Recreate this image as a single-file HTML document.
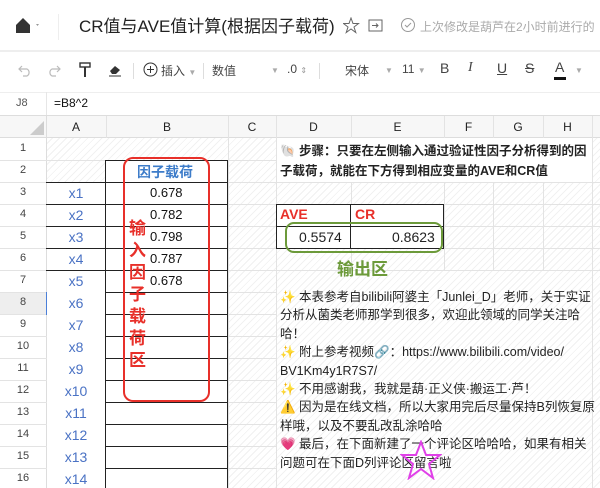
<!DOCTYPE html><html><head><meta charset="utf-8"><style>
*{margin:0;padding:0;box-sizing:border-box}
body{width:600px;height:488px;overflow:hidden;background:#fff;font-family:"Liberation Sans","Noto Sans CJK SC",sans-serif;position:relative;color:#222}
.a{position:absolute;white-space:nowrap}
.h{position:absolute;height:1px;background:#e3e3e3}
.v{position:absolute;width:1px;background:#e3e3e3}
.k{position:absolute;background:#222}
.rn{position:absolute;left:0;width:46px;text-align:center;font-size:11px;color:#444}
.cx{position:absolute;left:46px;width:60px;text-align:center;font-size:14px;color:#4a72c4}
.bv{position:absolute;left:150px;font-size:13px;color:#111}
.tb{position:absolute;top:62px;font-size:12px;color:#444}
.t{position:absolute;left:280px;font-size:12.5px;line-height:18.4px;color:#222;white-space:nowrap}
</style></head><body>
<div style="position:absolute;left:46px;top:138px;width:554px;height:350px;background:repeating-linear-gradient(135deg,#fff 0 4px,#f1f1f1 4px 5px)"></div>
<div style="position:absolute;left:0;top:138px;width:46px;height:350px;background:#fff"></div>
<svg class="a" style="left:14px;top:15px" width="28" height="20"><path d="M2 10 L9 3 L16 10 V18 H2Z" fill="#333"/><path d="M22 9 l3 0 l-1.5 2z" fill="#999"/></svg>
<div class="v" style="left:58px;top:14px;height:26px;background:#eee"></div>
<div class="a" style="left:79px;top:12px;font-size:17px;color:#222">CR值与AVE值计算(根据因子载荷)</div>
<svg class="a" style="left:343px;top:17px" width="50" height="18"><path d="M8 1 L10 6.5 L15.5 6.5 L11 10 L12.8 15.5 L8 12 L3.2 15.5 L5 10 L0.5 6.5 L6 6.5Z" fill="none" stroke="#666" stroke-width="1"/><rect x="26" y="3" width="13" height="11" fill="none" stroke="#666"/><path d="M29 8.5h6m-2-2l2 2-2 2" stroke="#666" fill="none"/></svg>
<svg class="a" style="left:400px;top:17px" width="16" height="16"><circle cx="8" cy="8" r="6.5" fill="none" stroke="#999"/><path d="M5 8l2 2 4-4" stroke="#999" fill="none"/></svg>
<div class="a" style="left:420px;top:18px;font-size:12px;color:#aaa">上次修改是葫芦在2小时前进行的</div>
<div class="h" style="left:0;top:50px;width:600px;background:#eee;height:2px"></div>
<svg class="a" style="left:18px;top:63px" width="14" height="14"><path d="M4 3 L1 6 L4 9 M1 6 H9 A4 4 0 0 1 9 13 H5" fill="none" stroke="#bbb" stroke-width="1.2"/></svg>
<svg class="a" style="left:47px;top:63px" width="14" height="14"><path d="M10 3 L13 6 L10 9 M13 6 H5 A4 4 0 0 0 5 13 H9" fill="none" stroke="#bbb" stroke-width="1.2"/></svg>
<svg class="a" style="left:78px;top:62px" width="14" height="16"><rect x="2" y="1" width="10" height="4" fill="none" stroke="#333" stroke-width="1.4"/><path d="M7 5 V8 M7 8 V15" stroke="#333" stroke-width="2"/></svg>
<svg class="a" style="left:108px;top:63px" width="14" height="14"><path d="M2 8 L7 3 L12 7 L8 11 H4Z" fill="#333"/><path d="M1 13h12" stroke="#333"/></svg>
<div class="v" style="left:133px;top:63px;height:16px;background:#ddd"></div>
<svg class="a" style="left:143px;top:62px" width="15" height="15"><circle cx="7.5" cy="7.5" r="6.5" fill="none" stroke="#333"/><path d="M4 7.5h7M7.5 4v7" stroke="#333"/></svg>
<div class="tb" style="left:161px">插入 <span style="color:#aaa;font-size:8px">▼</span></div>
<div class="v" style="left:203px;top:63px;height:16px;background:#ddd"></div>
<div class="tb" style="left:212px">数值</div>
<div class="tb" style="left:271px;color:#aaa;font-size:8px;top:66px">▼</div>
<div class="tb" style="left:287px">.0 <span style="font-size:8px;color:#999">⇕</span></div>
<div class="v" style="left:319px;top:63px;height:16px;background:#ddd"></div>
<div class="tb" style="left:345px">宋体</div>
<div class="tb" style="left:385px;color:#aaa;font-size:8px;top:66px">▼</div>
<div class="tb" style="left:402px">11 <span style="font-size:8px;color:#aaa">▼</span></div>
<div class="tb" style="left:440px;font-size:14px;top:60px">B</div>
<div class="tb" style="left:468px;font-size:14px;top:60px;font-style:italic;font-family:'Liberation Serif'">I</div>
<div class="tb" style="left:497px;font-size:14px;top:60px;text-decoration:underline">U</div>
<div class="tb" style="left:525px;font-size:14px;top:60px;text-decoration:line-through">S</div>
<div class="tb" style="left:555px;font-size:14px;top:59px">A</div>
<div class="a" style="left:554px;top:77px;width:12px;height:3px;background:#111"></div>
<div class="tb" style="left:575px;color:#aaa;font-size:8px;top:66px">▼</div>
<div class="h" style="left:0;top:92px;width:600px;background:#eee"></div>
<div class="a" style="left:16px;top:97px;font-size:11px;color:#555">J8</div>
<div class="v" style="left:46px;top:92px;height:24px;background:#e6e6e6"></div>
<div class="a" style="left:54px;top:96px;font-size:12px;color:#111">=B8^2</div>
<div class="h" style="left:0;top:115px;width:600px;background:#ddd"></div>
<div class="a" style="left:0;top:116px;width:600px;height:22px;background:#f7f7f7"></div>
<svg class="a" style="left:30px;top:121px" width="14" height="14"><path d="M14 0V14H0Z" fill="#ccc"/></svg>
<div class="a" style="left:46px;top:120px;width:60px;text-align:center;font-size:12px">A</div>
<div class="a" style="left:106px;top:120px;width:122px;text-align:center;font-size:12px">B</div>
<div class="a" style="left:228px;top:120px;width:48px;text-align:center;font-size:12px">C</div>
<div class="a" style="left:276px;top:120px;width:75px;text-align:center;font-size:12px">D</div>
<div class="a" style="left:351px;top:120px;width:93px;text-align:center;font-size:12px">E</div>
<div class="a" style="left:444px;top:120px;width:49px;text-align:center;font-size:12px">F</div>
<div class="a" style="left:493px;top:120px;width:50px;text-align:center;font-size:12px">G</div>
<div class="a" style="left:543px;top:120px;width:49px;text-align:center;font-size:12px">H</div>
<div class="h" style="left:0;top:137px;width:600px;background:#ddd"></div>
<div class="v" style="left:46px;top:116px;height:372px;background:#ddd"></div>
<div class="v" style="left:106px;top:116px;height:22px"></div>
<div class="v" style="left:228px;top:116px;height:372px"></div>
<div class="v" style="left:276px;top:116px;height:372px"></div>
<div class="v" style="left:351px;top:116px;height:22px"></div>
<div class="v" style="left:351px;top:182px;height:88px"></div>
<div class="v" style="left:444px;top:116px;height:22px"></div>
<div class="v" style="left:444px;top:182px;height:88px"></div>
<div class="v" style="left:493px;top:116px;height:22px"></div>
<div class="v" style="left:493px;top:182px;height:88px"></div>
<div class="v" style="left:543px;top:116px;height:22px"></div>
<div class="v" style="left:543px;top:182px;height:88px"></div>
<div class="v" style="left:592px;top:116px;height:372px"></div>
<div class="h" style="left:0;top:160px;width:276px"></div>
<div class="h" style="left:0;top:182px;width:600px"></div>
<div class="h" style="left:0;top:204px;width:600px"></div>
<div class="h" style="left:0;top:226px;width:600px"></div>
<div class="h" style="left:0;top:248px;width:600px"></div>
<div class="h" style="left:0;top:270px;width:600px"></div>
<div class="h" style="left:0;top:292px;width:276px"></div>
<div class="h" style="left:0;top:314px;width:276px"></div>
<div class="h" style="left:0;top:336px;width:276px"></div>
<div class="h" style="left:0;top:358px;width:276px"></div>
<div class="h" style="left:0;top:380px;width:276px"></div>
<div class="h" style="left:0;top:402px;width:276px"></div>
<div class="h" style="left:0;top:424px;width:276px"></div>
<div class="h" style="left:0;top:446px;width:276px"></div>
<div class="h" style="left:0;top:468px;width:276px"></div>
<div class="a" style="left:0;top:293px;width:46px;height:21px;background:#eee"></div>
<div class="rn" style="top:142px">1</div><div class="rn" style="top:164px">2</div><div class="rn" style="top:186px">3</div><div class="rn" style="top:208px">4</div><div class="rn" style="top:230px">5</div><div class="rn" style="top:252px">6</div><div class="rn" style="top:274px">7</div><div class="rn" style="top:296px">8</div><div class="rn" style="top:318px">9</div><div class="rn" style="top:340px">10</div><div class="rn" style="top:362px">11</div><div class="rn" style="top:384px">12</div><div class="rn" style="top:406px">13</div><div class="rn" style="top:428px">14</div><div class="rn" style="top:450px">15</div><div class="rn" style="top:472px">16</div>
<div class="a" style="left:47px;top:182px;width:181px;height:306px;background:#fff"></div>
<div class="a" style="left:106px;top:160px;width:122px;height:22px;background:#fff"></div>
<div class="k" style="left:46px;top:182px;width:182px;height:1px"></div>
<div class="k" style="left:46px;top:204px;width:182px;height:1px"></div>
<div class="k" style="left:46px;top:226px;width:182px;height:1px"></div>
<div class="k" style="left:46px;top:248px;width:182px;height:1px"></div>
<div class="k" style="left:46px;top:270px;width:182px;height:1px"></div>
<div class="k" style="left:106px;top:292px;width:122px;height:1px"></div>
<div class="k" style="left:106px;top:314px;width:122px;height:1px"></div>
<div class="k" style="left:106px;top:336px;width:122px;height:1px"></div>
<div class="k" style="left:106px;top:358px;width:122px;height:1px"></div>
<div class="k" style="left:106px;top:380px;width:122px;height:1px"></div>
<div class="k" style="left:106px;top:402px;width:122px;height:1px"></div>
<div class="k" style="left:106px;top:424px;width:122px;height:1px"></div>
<div class="k" style="left:106px;top:446px;width:122px;height:1px"></div>
<div class="k" style="left:106px;top:468px;width:122px;height:1px"></div>
<div class="k" style="left:106px;top:160px;width:122px;height:1px"></div>
<div class="k" style="left:105px;top:160px;width:1px;height:328px"></div>
<div class="k" style="left:227px;top:160px;width:1px;height:328px"></div>
<div class="a" style="left:46px;top:292px;width:1px;height:23px;background:#4a7fd9"></div>
<div class="cx" style="top:185px">x1</div><div class="cx" style="top:207px">x2</div><div class="cx" style="top:229px">x3</div><div class="cx" style="top:251px">x4</div><div class="cx" style="top:273px">x5</div><div class="cx" style="top:295px">x6</div><div class="cx" style="top:317px">x7</div><div class="cx" style="top:339px">x8</div><div class="cx" style="top:361px">x9</div><div class="cx" style="top:383px">x10</div><div class="cx" style="top:405px">x11</div><div class="cx" style="top:427px">x12</div><div class="cx" style="top:449px">x13</div><div class="cx" style="top:471px">x14</div>
<div class="a" style="left:137px;top:162px;font-size:14px;font-weight:bold;color:#3d7cc9">因子载荷</div>
<div class="bv" style="top:185px">0.678</div><div class="bv" style="top:207px">0.782</div><div class="bv" style="top:229px">0.798</div><div class="bv" style="top:251px">0.787</div><div class="bv" style="top:273px">0.678</div>
<div class="a" style="left:123px;top:157px;width:87px;height:245px;border:2px solid #e8302a;border-radius:10px"></div>
<div class="a" style="left:129px;top:218px;width:20px;font-size:17px;line-height:22px;color:#e8302a;white-space:normal;font-weight:bold">输入因子载荷区</div>
<div class="a" style="left:277px;top:138px;width:315px;height:44px;background:#fff"></div>
<div class="a" style="left:280px;top:141px;font-size:12.5px;font-weight:bold;line-height:20px;color:#222">🐚 步骤：只要在左侧输入通过验证性因子分析得到的因<br>子载荷，就能在下方得到相应变量的AVE和CR值</div>
<div class="a" style="left:277px;top:205px;width:167px;height:43px;background:#fff"></div>
<div class="a" style="left:276px;top:204px;width:168px;height:45px;border:1px solid #222"></div>
<div class="k" style="left:276px;top:226px;width:168px;height:1px"></div>
<div class="k" style="left:350px;top:204px;width:1px;height:45px"></div>
<div class="a" style="left:280px;top:206px;font-size:14px;font-weight:bold;color:#e8302a">AVE</div>
<div class="a" style="left:355px;top:206px;font-size:14px;font-weight:bold;color:#e8302a">CR</div>
<div class="a" style="left:299px;top:229px;font-size:14px">0.5574</div>
<div class="a" style="left:392px;top:229px;font-size:14px">0.8623</div>
<div class="a" style="left:285px;top:222px;width:158px;height:31px;border:2px solid #6c9a3a;border-radius:9px"></div>
<div class="a" style="left:337px;top:255px;font-size:17px;font-weight:bold;color:#6c9a3a">输出区</div>
<div class="t" style="top:288px">✨ 本表参考自bilibili阿婆主「Junlei_D」老师，关于实证<br>分析从菌类老师那学到很多，欢迎此领域的同学关注哈<br>哈！<br>✨ 附上参考视频🔗：https://www.bilibili.com/video/<br>BV1Km4y1R7S7/<br>✨ 不用感谢我，我就是葫·正义侠·搬运工·芦！<br>⚠️ 因为是在线文档，所以大家用完后尽量保持B列恢复原<br>样哦，以及不要乱改乱涂哈哈<br>💗 最后，在下面新建了一个评论区哈哈哈，如果有相关<br>问题可在下面D列评论区留言啦</div>
<svg class="a" style="left:400px;top:440px" width="42" height="40"><path d="M21 2 L26 15 L40 15 L29 24 L33 38 L21 29 L9 38 L13 24 L2 15 L16 15Z" fill="none" stroke="#e040e8" stroke-width="2"/></svg>
</body></html>
